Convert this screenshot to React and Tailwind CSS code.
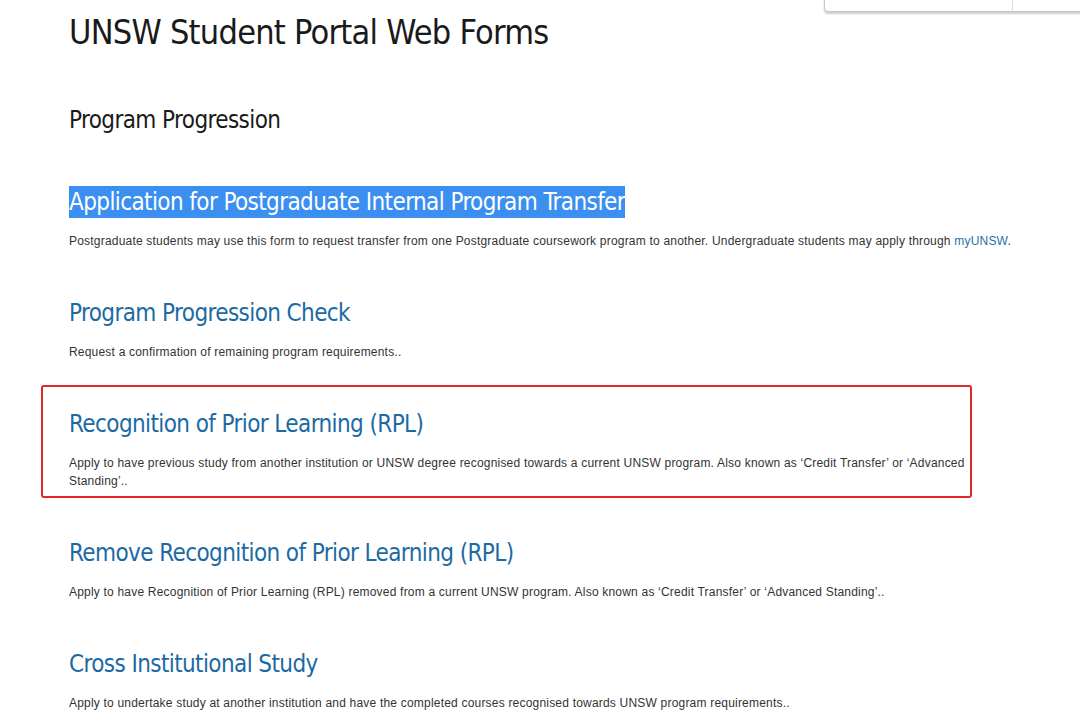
export default function App() {
  const forms = [
    {
      title: "Application for Postgraduate Internal Program Transfer",
      selected: true,
      desc: (
        <>
          Postgraduate students may use this form to request transfer from one Postgraduate coursework program to
          another. Undergraduate students may apply through{" "}
          <a href="#myunsw" className="text-[#2a6fa8]">
            myUNSW
          </a>
          .
        </>
      ),
    },
    { title: "Program Progression Check", desc: "Request a confirmation of remaining program requirements.." },
    {
      title: "Recognition of Prior Learning (RPL)",
      desc: "Apply to have previous study from another institution or UNSW degree recognised towards a current UNSW program. Also known as \u2018Credit Transfer\u2019 or \u2018Advanced Standing\u2019..",
    },
    {
      title: "Remove Recognition of Prior Learning (RPL)",
      desc: "Apply to have Recognition of Prior Learning (RPL) removed from a current UNSW program. Also known as \u2018Credit Transfer\u2019 or \u2018Advanced Standing\u2019..",
    },
    {
      title: "Cross Institutional Study",
      desc: "Apply to undertake study at another institution and have the completed courses recognised towards UNSW program requirements..",
    },
  ]

  return (
    <div className="relative h-[716px] w-[1080px] overflow-hidden bg-white">
      {/* top-right search box, cut off */}
      <div className="absolute -top-8 left-[824px] flex h-[44px] w-[300px] rounded-sm border border-[#c8c8c8] bg-white shadow-[0_2px_2px_rgba(0,0,0,0.2)]">
        <div className="w-[188px] border-r border-[#dcdcdc]"></div>
      </div>

      <main className="w-[1012px] pl-[69px] pt-[9px]">
        <h1 className="font-['DejaVu_Sans_Condensed',sans-serif] text-[34px] leading-[46px] tracking-[-0.75px] text-[#1a1a1a]">
          UNSW Student Portal Web Forms
        </h1>

        <h2 className="mt-[51px] font-['DejaVu_Sans_Condensed',sans-serif] text-[24px] leading-[28px] tracking-[-0.6px] text-[#1a1a1a]">
          Program Progression
        </h2>

        <div className="mt-[52px]">
          {forms.map((form) => (
            <section key={form.title} className="mb-[47px]">
              <h3 className="font-['DejaVu_Sans_Condensed',sans-serif] text-[24px] leading-[32px] tracking-[-0.6px] text-[#1c6aa3]">
                <span className={form.selected ? "bg-[#3b8ff0] py-[2px] text-white" : ""}>{form.title}</span>
              </h3>
              <p className="mt-[14px] font-['Liberation_Sans','Arial',sans-serif] text-[12px] leading-[18px] tracking-[0.2px] text-[#333]">
                {form.desc}
              </p>
            </section>
          ))}
        </div>
      </main>

      {/* annotation box around RPL */}
      <div className="absolute left-[41px] top-[385px] h-[113px] w-[931px] rounded-[3px] border-2 border-[#e0282a]"></div>
    </div>
  )
}
